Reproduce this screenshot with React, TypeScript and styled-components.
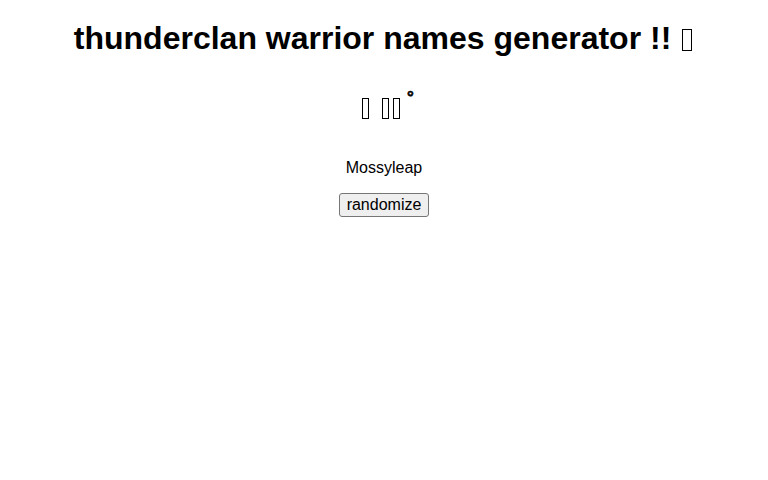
import React, { useState } from 'react';
import styled, { createGlobalStyle } from 'styled-components';

const GlobalStyle = createGlobalStyle`
  body {
    margin: 0;
    font-family: "Liberation Sans", Arial, sans-serif;
    background: #ffffff;
    color: #000000;
  }
`;

const names = ['Mossyleap', 'Thornclaw', 'Brambleheart', 'Leafpool', 'Sandstorm', 'Firestar'];

const Page = styled.div`
  display: flex;
  flex-direction: column;
  align-items: center;
  padding-top: 20px;
`;

const Title = styled.h1`
  font-size: 32px;
  font-weight: bold;
  line-height: 36px;
  margin: 0;
  text-align: center;
`;

// missing-glyph box, as the browser draws it
const Tofu = styled.span<{ $w: number; $h: number }>`
  display: inline-block;
  box-sizing: border-box;
  width: ${(p) => p.$w}px;
  height: ${(p) => p.$h}px;
  border: 1.5px solid #000000;
  margin: 0 2px;
`;

const TitleTofu = styled(Tofu)`
  vertical-align: -2px;
  margin-left: 2px;
`;

const Kaomoji = styled.div`
  display: flex;
  align-items: flex-end;
  justify-content: center;
  height: 34px;
  margin-top: 29px;
  padding-left: 6px;
`;

const Gap = styled.span`
  width: 9px;
`;

const Ring = styled.span`
  align-self: flex-start;
  font-size: 17px;
  font-weight: bold;
  line-height: 17px;
  margin-left: 5px;
  margin-top: 4px;
  -webkit-text-stroke: 0.6px #000000;
`;

const NameText = styled.p`
  font-size: 16px;
  line-height: 18px;
  margin: 40px 0 0;
`;

const RandomButton = styled.button`
  font-family: "Liberation Sans", Arial, sans-serif;
  font-size: 16px;
  height: 24px;
  margin-top: 16px;
  padding: 0 7px;
  color: #000000;
  background: #efefef;
  border: 1px solid #767676;
  border-radius: 3px;
`;

const App = () => {
  const [index, setIndex] = useState(0);

  return (
    <Page>
      <GlobalStyle />
      <Title>
        thunderclan warrior names generator !! <TitleTofu $w={10} $h={22} />
      </Title>
      <Kaomoji>
        <Tofu $w={7} $h={21} />
        <Gap />
        <Tofu $w={7} $h={21} />
        <Tofu $w={7} $h={21} />
        <Ring>°</Ring>
      </Kaomoji>
      <NameText>{names[index]}</NameText>
      <RandomButton onClick={() => setIndex(Math.floor(Math.random() * names.length))}>
        randomize
      </RandomButton>
    </Page>
  );
};

export default App;
